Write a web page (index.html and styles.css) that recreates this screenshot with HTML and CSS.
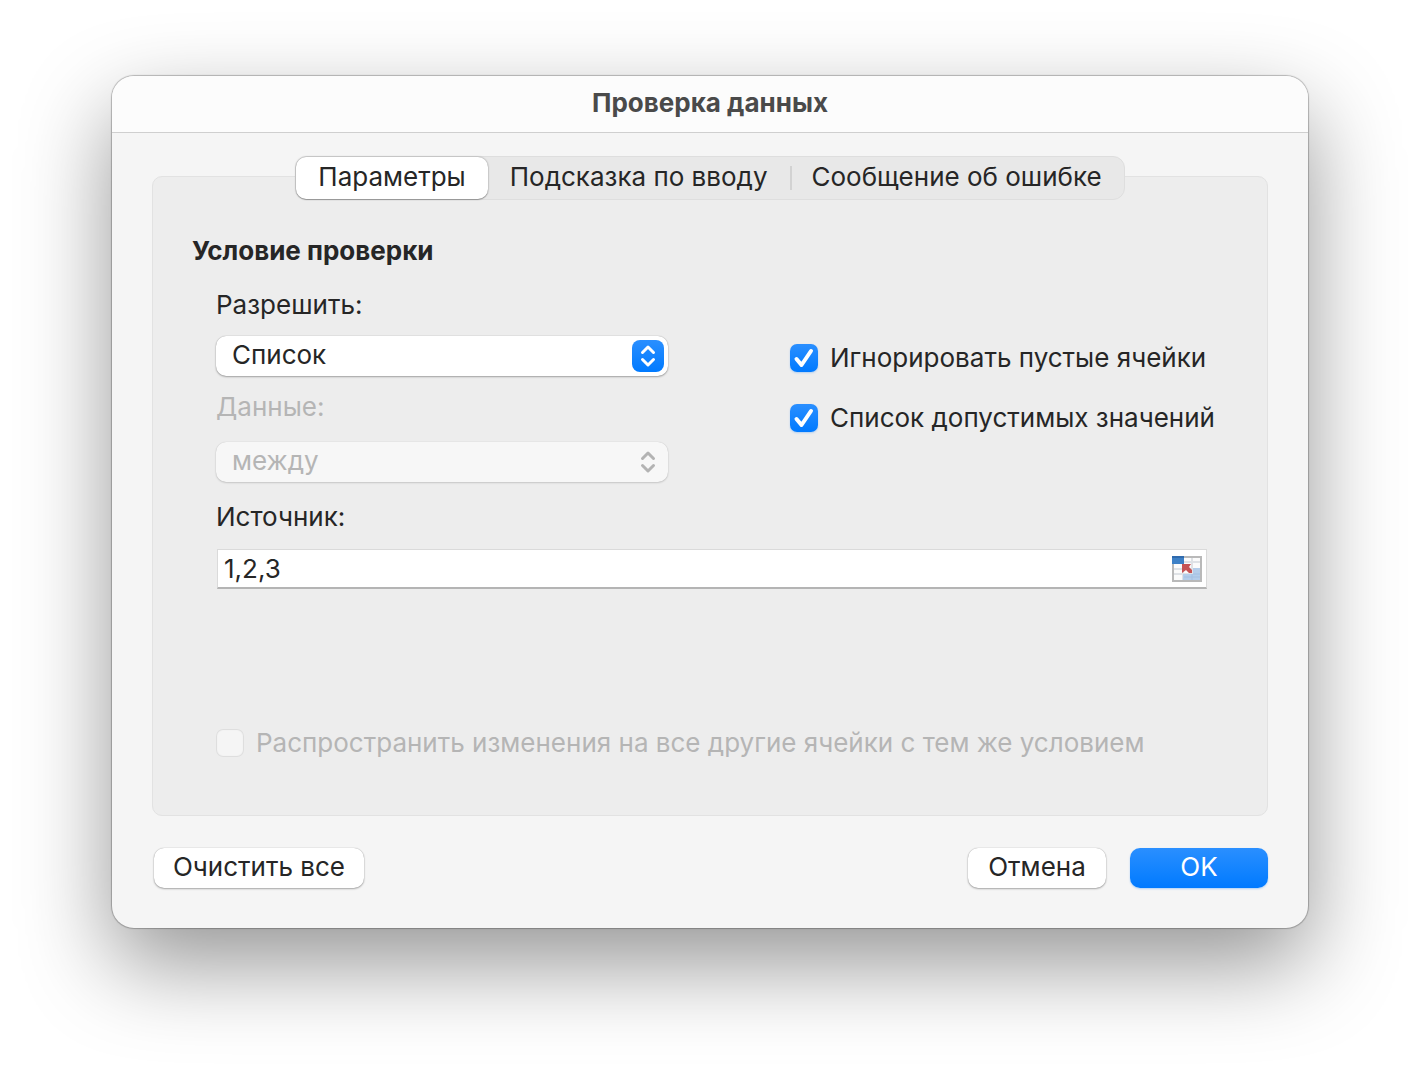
FILE: index.html
```html
<!DOCTYPE html>
<html lang="ru">
<head>
  <meta charset="UTF-8" />
  <meta name="viewport" content="width=device-width, initial-scale=1.0"/>
  <title>Проверка данных</title>
  <link rel="stylesheet" href="styles.css">
</head>
<body>

  <form class="dialog" role="dialog" aria-labelledby="dialog-title">
    <header class="titlebar">
      <h1 id="dialog-title">Проверка данных</h1>
    </header>

    <div class="content">
      <div class="tabs" role="tablist">
        <button type="button" class="tab active" role="tab" aria-selected="true">Параметры</button>
        <button type="button" class="tab" role="tab" aria-selected="false">Подсказка по вводу</button>
        <button type="button" class="tab divided" role="tab" aria-selected="false">Сообщение об ошибке</button>
      </div>

      <section class="panel">
        <h2>Условие проверки</h2>

        <div class="fields">
          <div class="columns">
            <div class="column">
              <label for="allow">Разрешить:</label>
              <div class="select">
                <select id="allow">
                  <option>Список</option>
                </select>
                <svg class="arrows" viewBox="0 0 32 32" aria-hidden="true">
                  <path d="M10.5 12.5 16 7l5.5 5.5M10.5 19.5 16 25l5.5-5.5"/>
                </svg>
              </div>

              <label for="data" class="disabled">Данные:</label>
              <div class="select disabled">
                <select id="data" disabled>
                  <option>между</option>
                </select>
                <svg class="arrows" viewBox="0 0 32 32" aria-hidden="true">
                  <path d="M10.5 12.5 16 7l5.5 5.5M10.5 19.5 16 25l5.5-5.5"/>
                </svg>
              </div>
            </div>

            <div class="checks">
              <label class="check">
                <input type="checkbox" checked>
                <svg viewBox="0 0 28 28" aria-hidden="true"><path d="M6.5 15l5 6L21 7"/></svg>
                Игнорировать пустые ячейки
              </label>
              <label class="check">
                <input type="checkbox" checked>
                <svg viewBox="0 0 28 28" aria-hidden="true"><path d="M6.5 15l5 6L21 7"/></svg>
                Список допустимых значений
              </label>
            </div>
          </div>

          <label for="source">Источник:</label>
          <div class="source">
            <input type="text" id="source" value="1,2,3">
            <button type="button" class="range-btn" aria-label="Выбрать диапазон">
              <svg viewBox="0 0 30 26" aria-hidden="true">
                <rect x="1" y="1" width="28" height="24" fill="#fbfbfb" stroke="#b9b9b9" stroke-width="2"/>
                <path d="M2 13h26M2 18h26M11 2v22M20 2v22M12 6h16" stroke="#dfe2e6" stroke-width="2"/>
                <path d="M21 12h7v12H11v-6h10z" fill="#b4cdea"/>
                <path d="M21 18h7M20 18v6M12 21h16" stroke="#a3c0e2"/>
                <path d="M0 0h12v8H0z" fill="#3d80c6"/>
                <path d="M0 1h12" stroke="#2f6aad" stroke-width="2"/>
                <path d="M10 8h9l-2 3 3 3v3h-3l-3-3-4 3z" fill="#c65355"/>
              </svg>
            </button>
          </div>

          <label class="check disabled">
            <input type="checkbox" disabled>
            Распространить изменения на все другие ячейки с тем же условием
          </label>
        </div>
      </section>

      <footer class="actions">
        <button type="button" class="btn wide">Очистить все</button>
        <button type="button" class="btn cancel">Отмена</button>
        <button type="submit" class="btn primary">OK</button>
      </footer>
    </div>
  </form>

</body>
</html>
```
FILE: styles.css
```css
:root {
  --text: #262626;
  --muted: #b5b5b5;
  --blue: linear-gradient(#2a8fff, #007aff);
  --raised: 0 0 1px rgba(0, 0, 0, 0.35), 0 1px 2px rgba(0, 0, 0, 0.3);
}

* {
  box-sizing: border-box;
}

body {
  margin: 0;
  padding: 76px 112px 148px;
  background: #fff;
  color: var(--text);
  font: 26px/32px Inter, "Liberation Sans", sans-serif;
}

button,
input,
select {
  font: inherit;
  color: inherit;
}

.dialog {
  border-radius: 22px;
  background: #f5f5f5;
  box-shadow: 0 0 1px 1px rgba(0, 0, 0, 0.25), 0 36px 90px rgba(0, 0, 0, 0.42);
}

.titlebar {
  padding: 11px 12px 13px;
  border-bottom: 1px solid #cfcfcf;
  border-radius: 22px 22px 0 0;
  background: #fcfcfc;
  text-align: center;
}

h1,
h2 {
  margin: 0;
  font-size: 26px;
  line-height: 32px;
  font-weight: 700;
}

h1 {
  color: #4a4a4a;
}

.content {
  padding: 23px 40px 40px;
}

/* tabs sit on the upper edge of the panel */
.tabs {
  position: relative;
  display: flex;
  width: fit-content;
  height: 44px;
  margin: 0 auto -24px;
  border: 1px solid #dedede;
  border-radius: 12px;
  background: #e8e8e8;
}

.tab {
  position: relative;
  padding: 0 22px 2px;
  border: none;
  border-radius: 10px;
  background: none;
  white-space: nowrap;
}

.tab.active {
  background: #fff;
  box-shadow: 0 0 2px rgba(0, 0, 0, 0.4), 0 1px 1px rgba(0, 0, 0, 0.25);
}

.tab.divided:before {
  content: '';
  position: absolute;
  left: 0;
  top: 9px;
  width: 2px;
  height: 24px;
  background: #d2d2d2;
}

.panel {
  padding: 58px 39px 56px;
  border: 1px solid #e2e2e2;
  border-radius: 10px;
  background: #ededed;
}

.fields {
  display: flex;
  flex-direction: column;
  padding: 22px 0 0 24px;
}

.columns {
  display: grid;
  grid-template-columns: minmax(0, 452fr) minmax(0, 438fr);
  column-gap: 122px;
}

.column {
  display: flex;
  flex-direction: column;
}

label.disabled {
  color: var(--muted);
}

.select {
  position: relative;
  margin: 15px 0;
}

.select select {
  display: block;
  width: 100%;
  height: 40px;
  padding: 0 48px 2px 16px;
  appearance: none;
  border: none;
  border-radius: 10px;
  background: #fff;
  box-shadow: var(--raised);
}

.select.disabled {
  margin: 19px 0;
}

.select.disabled select {
  background: #f7f7f7;
  color: var(--muted);
  opacity: 1;
  box-shadow: 0 0 1px rgba(0, 0, 0, 0.2), 0 1px 2px rgba(0, 0, 0, 0.15);
}

.arrows {
  position: absolute;
  top: 4px;
  right: 4px;
  width: 32px;
  height: 32px;
  border-radius: 8px;
  background: var(--blue);
  fill: none;
  stroke: #fff;
  stroke-width: 3;
  stroke-linecap: round;
  stroke-linejoin: round;
  pointer-events: none;
}

.disabled .arrows {
  background: none;
  stroke: #b3b3b3;
}

.checks {
  display: flex;
  flex-direction: column;
  gap: 28px;
  padding-top: 53px;
}

.check {
  position: relative;
  display: flex;
  align-items: center;
  gap: 12px;
  white-space: nowrap;
}

.check input {
  flex: none;
  width: 28px;
  height: 28px;
  margin: 0;
  appearance: none;
  border-radius: 7px;
  background: #f5f5f5;
  box-shadow: inset 0 0 1px 1px #dcdcdc;
}

.check input:checked {
  background: var(--blue);
  box-shadow: 0 1px 2px rgba(0, 122, 255, 0.25);
}

.check svg {
  position: absolute;
  left: 0;
  width: 28px;
  height: 28px;
  fill: none;
  stroke: #fff;
  stroke-width: 4;
  stroke-linecap: round;
  stroke-linejoin: round;
  pointer-events: none;
}

.source {
  display: flex;
  align-items: center;
  height: 40px;
  margin: 16px 21px 138px 1px;
  padding-right: 4px;
  border: 1px solid #dadada;
  border-bottom: 2px solid #b4b4b4;
  background: #fff;
}

.source input {
  flex: 1;
  min-width: 0;
  padding: 0 6px;
  border: none;
  outline: none;
  background: none;
}

.range-btn {
  display: flex;
  padding: 0;
  border: none;
  background: none;
}

.range-btn svg {
  width: 30px;
  height: 26px;
}

.actions {
  display: flex;
  gap: 24px;
  margin-top: 32px;
  padding-left: 2px;
}

.btn {
  width: 138px;
  height: 40px;
  padding: 0 0 2px;
  border: none;
  border-radius: 10px;
  background: #fff;
  box-shadow: var(--raised);
  white-space: nowrap;
}

.btn.wide {
  width: 210px;
}

.btn.cancel {
  margin-left: auto;
}

.btn.primary {
  background: var(--blue);
  color: #fff;
  box-shadow: 0 1px 2px rgba(0, 122, 255, 0.3);
}
```
